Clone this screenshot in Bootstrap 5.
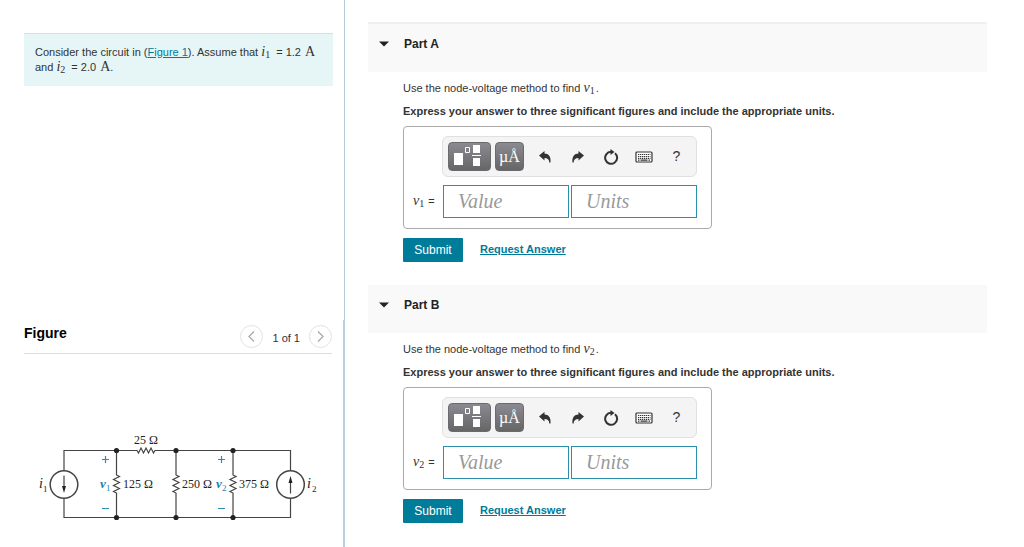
<!DOCTYPE html>
<html lang="en">
<head>
<meta charset="utf-8">
<meta name="viewport" content="width=device-width, initial-scale=1">
<title>Node-voltage method</title>
<link href="https://cdn.jsdelivr.net/npm/bootstrap@5.3.0/dist/css/bootstrap.min.css" rel="stylesheet">
<style>
  body { font-family: "Liberation Sans", Arial, sans-serif; font-size: 11px; line-height: 15px; color: #333; background: #fff; }
  a { color: #007a99; }
  .side-pane { flex: 0 0 345px; }
  .prompt-area { min-height: 320px; padding: 33px 11px 0 24px; border-right: 1px solid #b3c9dc; }
  .prompt-box { background: #e6f6f6; border-top: 1px solid #d8dfdf; padding: 11px 4px 11px 11px; }
  .figure-area { padding: 4px 11px 0 24px; border-right: 2px solid #b9cfe0; }
  .figure-head { height: 30px; border-bottom: 1px solid #dcdfdf; }
  .figure-head h2 { font-size: 14px; line-height: 18px; font-weight: 700; color: #000; }
  .pager { gap: 9px; margin-top: 1px; }
  .pager span { padding-top: 3px; }
  .pager button { width: 23px; height: 23px; border: 1px solid #e2e2e2; border-radius: 50%; background: #fff; padding: 0; display: flex; align-items: center; justify-content: center; }
  .circuit { display: block; width: 100%; margin-top: 76px; }
  .var { font-family: "Liberation Serif", "Times New Roman", serif; font-style: italic; font-size: 14px; line-height: 1; margin-right: 3px; }
  .var sub { font-style: normal; font-size: 10px; bottom: -2px; }
  .ask .var { margin-right: 1px; }
  .unit { font-family: "Liberation Serif", "Times New Roman", serif; font-size: 14px; line-height: 1; margin-left: 1px; }
  .main-pane { padding: 22px 37px 0 23px; }
  .part-head { height: 48px; background: #f9f9f9; padding: 0 11px; }
  .part-first { border-top: 2px solid #f0f0f0; height: 50px; }
  .part-head button { font-size: 12px; line-height: 16px; font-weight: 700; color: #222; background: none; border: 0; padding: 12px 0 0; gap: 15px; }
  .part-body { padding: 8px 0 23px 35px; }
  .ask { margin-bottom: 7px; line-height: 16px; }
  .instr { font-weight: 700; margin-bottom: 7px; line-height: 16px; }
  .answer-box { width: 309px; max-width: 100%; border: 1px solid #aaa; border-radius: 4px; padding: 9px 14px 10px 9px; }
  .tools { margin-left: 29px; height: 41px; background: #f4f4f4; border: 1px solid #e0e0e0; border-radius: 6px; padding: 0 0 0 5px; margin-bottom: 8px; }
  .tool-dark { flex: none; height: 29px; border: 1px solid #6b6b6f; border-radius: 4px; background: linear-gradient(#8b8a92, #666); color: #fff; padding: 0; margin-right: 4px; }
  .tool-tpl { width: 43px; }
  .tool-unit { width: 29px; font-family: "Liberation Serif", serif; font-size: 16px; line-height: 28px; }
  .tool-dark svg { display: block; margin: auto; }
  .tool-icon { width: 33px; flex: none; height: 29px; border: 0; background: none; padding: 0; color: #333; font-size: 14px; display: flex; align-items: center; justify-content: center; }
  .lhs { width: 30px; flex: none; }
  .lhs .var { margin-right: 1px; }
  .answer-input { height: 33px; width: 126px; min-width: 0; border: 1px solid #2b8fac; border-radius: 0; padding: 0 14px; font-family: "Liberation Serif", "Times New Roman", serif; font-size: 20px; font-style: italic; color: #333; background: #fff; }
  .answer-input::placeholder { color: #999; opacity: 1; }
  .actions { margin-top: 9px; gap: 17px; }
  .submit-btn { width: 60px; height: 24px; border: 0; border-radius: 1px; background: #007c9b; color: #fff; font-size: 12px; line-height: 24px; padding: 0; }
  .request-link { font-weight: 700; margin-top: -1px; }
</style>
</head>
<body>
<svg class="d-none" aria-hidden="true">
  <symbol id="i-template" viewBox="0 0 41 27">
    <path fill="#fff" d="M5 10h9v12H5zM24 2h7v8h-7zM24 15h7v8h-7z"/>
    <path fill="#fff" d="M23 12h9v1h-9z"/>
    <path fill="none" stroke="#fff" d="M16.500 4.500h4v5h-4z"/>
  </symbol>
  <symbol id="i-undo" viewBox="0 0 14 14">
    <path fill="currentColor" d="M1 5.500 6.500 1v2.600C10.500 3.700 13.200 6.500 12.500 12.500h-1.200c0-3-1.600-4.500-4.800-4.500v2.500z"/>
  </symbol>
  <symbol id="i-redo" viewBox="0 0 14 14">
    <path fill="currentColor" d="M13 5.500 7.500 1v2.600C3.500 3.700 .8 6.500 1.500 12.500h1.200c0-3 1.600-4.500 4.800-4.500v2.500z"/>
  </symbol>
  <symbol id="i-reset" viewBox="0 0 16 16">
    <path fill="none" stroke="currentColor" stroke-width="2" d="M12 4.200A6 6 0 1 1 8 2.800"/>
    <path fill="currentColor" d="M7.500 0l4 3-4 3z"/>
  </symbol>
  <symbol id="i-keyboard" viewBox="0 0 18 12">
    <rect x="1" y="1" width="16" height="10" rx="1" fill="#fff" stroke="currentColor" stroke-width="1.200"/>
    <path stroke="currentColor" stroke-width="1.200" stroke-dasharray="1.300 .7" d="M3 3.500h12.500M3 5.500h12.500M3 7.300h12.500"/>
    <path stroke="currentColor" stroke-width="1.200" d="M3 9.200h1.500M5.500 9.200h7M13.500 9.200H15"/>
  </symbol>
</svg>

<div class="d-flex min-vh-100">
  <aside class="side-pane d-flex flex-column">
    <div class="prompt-area">
      <div class="prompt-box">Consider the circuit in (<a href="#figure">Figure 1</a>). Assume that <span class="var">i<sub>1</sub></span> =&nbsp;1.2&nbsp;<span class="unit">A</span><br>and <span class="var">i<sub>2</sub></span> =&nbsp;2.0&nbsp;<span class="unit">A</span>.</div>
    </div>
    <section class="figure-area flex-grow-1" id="figure">
      <div class="figure-head d-flex justify-content-between align-items-start">
        <h2 class="m-0">Figure</h2>
        <div class="pager d-flex align-items-center">
          <button type="button" aria-label="Previous figure"><svg width="7" height="11" viewBox="0 0 7 11"><path d="M6 .5 1 5.500l5 5" fill="none" stroke="#aaa" stroke-width="1.300"/></svg></button>
          <span>1 of 1</span>
          <button type="button" aria-label="Next figure"><svg width="7" height="11" viewBox="0 0 7 11"><path d="M1 .5l5 5-5 5" fill="none" stroke="#aaa" stroke-width="1.300"/></svg></button>
        </div>
      </div>
      <svg class="circuit" viewBox="24 430 308 95" role="img" aria-label="Circuit with two current sources and four resistors">
        <g fill="none" stroke="#444" stroke-width="1.200">
          <path d="M64 470.500V450.500H137l1.500 2.500 2.500-5 2.500 5 2.500-5 2.500 5 2.500-5 2.500 5 1.500-2.500H290.500V470.500M290.500 498.500V517.500H64V498.500"/>
          <path d="M116.500 450.500V475l3 1.500-6 3 6 3-6 3 6 3-6 3 3 1.500V517.500"/>
          <path d="M176 450.500V475l3 1.500-6 3 6 3-6 3 6 3-6 3 3 1.500V517.500"/>
          <path d="M233 450.500V475l3 1.500-6 3 6 3-6 3 6 3-6 3 3 1.500V517.500"/>
          <circle cx="64" cy="484.500" r="13.800" stroke-width="1.500"/>
          <circle cx="290.500" cy="484.500" r="13.800" stroke-width="1.500"/>
          <path d="M64 475.500V487M290.500 493.500V482"/>
        </g>
        <path fill="#222" d="M62 486h4l-2 7zM288.500 483h4l-2-7z"/>
        <g fill="#222">
          <circle cx="116.500" cy="450.500" r="2.600"/><circle cx="176" cy="450.500" r="2.600"/><circle cx="233" cy="450.500" r="2.600"/>
          <circle cx="116.500" cy="517.500" r="2.600"/><circle cx="176" cy="517.500" r="2.600"/><circle cx="233" cy="517.500" r="2.600"/>
        </g>
        <path stroke="#2b8fb5" stroke-width="1.200" d="M102 459.500h7M105.500 456v7M102 508.500h7M218 459.500h7M221.500 456v7M218 508.500h7"/>
        <g font-family="Liberation Serif, Times New Roman, serif" font-size="12" fill="#222">
          <text x="134" y="444">25 Ω</text>
          <text x="123" y="488">125 Ω</text>
          <text x="182" y="488">250 Ω</text>
          <text x="239" y="488">375 Ω</text>
          <text x="39" y="488" font-style="italic" font-size="14">i</text><text x="43" y="492" font-size="9">1</text>
          <text x="307" y="488" font-style="italic" font-size="14">i</text><text x="312" y="492" font-size="9">2</text>
          <g fill="#1583ad">
            <text x="100" y="488" font-style="italic" font-weight="bold" font-size="13">v</text><text x="106" y="491" font-size="9">1</text>
            <text x="216" y="488" font-style="italic" font-weight="bold" font-size="13">v</text><text x="222" y="491" font-size="9">2</text>
          </g>
        </g>
      </svg>
    </section>
  </aside>

  <main class="main-pane flex-grow-1">
    <section>
      <div class="part-head part-first">
        <button type="button" class="d-flex align-items-center"><svg width="10" height="6" viewBox="0 0 10 6"><path d="M0 .5h10L5 5.500z" fill="#222"/></svg>Part A</button>
      </div>
      <div class="part-body">
        <p class="ask">Use the node-voltage method to find <span class="var">v<sub>1</sub></span>.</p>
        <p class="instr">Express your answer to three significant figures and include the appropriate units.</p>
        <div class="answer-box">
          <div class="tools d-flex align-items-center">
            <button type="button" class="tool-dark tool-tpl" aria-label="Templates"><svg width="41" height="27"><use href="#i-template"/></svg></button>
            <button type="button" class="tool-dark tool-unit">µÅ</button>
            <button type="button" class="tool-icon" aria-label="Undo"><svg width="14" height="14"><use href="#i-undo"/></svg></button>
            <button type="button" class="tool-icon" aria-label="Redo"><svg width="14" height="14"><use href="#i-redo"/></svg></button>
            <button type="button" class="tool-icon" aria-label="Reset"><svg width="16" height="16"><use href="#i-reset"/></svg></button>
            <button type="button" class="tool-icon" aria-label="Keyboard shortcuts"><svg width="18" height="12"><use href="#i-keyboard"/></svg></button>
            <button type="button" class="tool-icon">?</button>
          </div>
          <div class="d-flex align-items-center">
            <label class="lhs" for="value-a"><span class="var">v<sub>1</sub></span> =</label>
            <input class="answer-input" id="value-a" type="text" placeholder="Value">
            <input class="answer-input ms-auto" type="text" placeholder="Units" aria-label="Units">
          </div>
        </div>
        <div class="actions d-flex align-items-center">
          <button type="submit" class="submit-btn">Submit</button>
          <a class="request-link" href="#">Request Answer</a>
        </div>
      </div>
    </section>

    <section>
      <div class="part-head">
        <button type="button" class="d-flex align-items-center"><svg width="10" height="6" viewBox="0 0 10 6"><path d="M0 .5h10L5 5.500z" fill="#222"/></svg>Part B</button>
      </div>
      <div class="part-body">
        <p class="ask">Use the node-voltage method to find <span class="var">v<sub>2</sub></span>.</p>
        <p class="instr">Express your answer to three significant figures and include the appropriate units.</p>
        <div class="answer-box">
          <div class="tools d-flex align-items-center">
            <button type="button" class="tool-dark tool-tpl" aria-label="Templates"><svg width="41" height="27"><use href="#i-template"/></svg></button>
            <button type="button" class="tool-dark tool-unit">µÅ</button>
            <button type="button" class="tool-icon" aria-label="Undo"><svg width="14" height="14"><use href="#i-undo"/></svg></button>
            <button type="button" class="tool-icon" aria-label="Redo"><svg width="14" height="14"><use href="#i-redo"/></svg></button>
            <button type="button" class="tool-icon" aria-label="Reset"><svg width="16" height="16"><use href="#i-reset"/></svg></button>
            <button type="button" class="tool-icon" aria-label="Keyboard shortcuts"><svg width="18" height="12"><use href="#i-keyboard"/></svg></button>
            <button type="button" class="tool-icon">?</button>
          </div>
          <div class="d-flex align-items-center">
            <label class="lhs" for="value-b"><span class="var">v<sub>2</sub></span> =</label>
            <input class="answer-input" id="value-b" type="text" placeholder="Value">
            <input class="answer-input ms-auto" type="text" placeholder="Units" aria-label="Units">
          </div>
        </div>
        <div class="actions d-flex align-items-center">
          <button type="submit" class="submit-btn">Submit</button>
          <a class="request-link" href="#">Request Answer</a>
        </div>
      </div>
    </section>
  </main>
</div>
<script src="https://cdn.jsdelivr.net/npm/bootstrap@5.3.0/dist/js/bootstrap.bundle.min.js"></script>
</body>
</html>
